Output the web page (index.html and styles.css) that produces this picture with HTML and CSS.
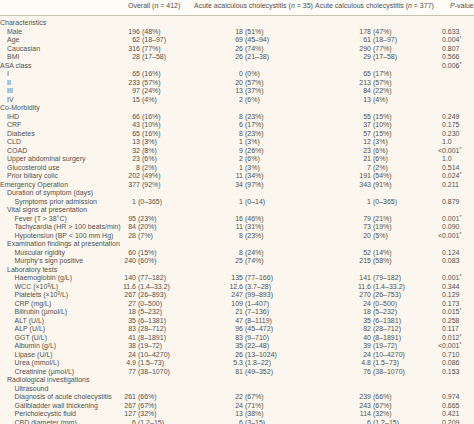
FILE: index.html
```html
<!DOCTYPE html>
<html>
<head>
<meta charset="utf-8">
<link rel="stylesheet" href="styles.css">
</head>
<body>
<div class="t">
  <div class="hd">
    <span></span>
    <span>Overall (<i>n</i> = 412)</span>
    <span>Acute acalculous cholecystitis (<i>n</i> = 35)</span>
    <span>Acute calculous cholecystitis (<i>n</i> = 377)</span>
    <span><i>P</i>-value</span>
  </div>

  <div class="r a"><span class="l0">Characteristics</span></div>
  <div class="r a"><span class="l1">Male</span><span class="c1"><span class="n">196</span> (48%)</span><span class="c2"><span class="n">18</span> (51%)</span><span class="c3"><span class="n">178</span> (47%)</span><span class="c4">0.633</span></div>
  <div class="r a"><span class="l1">Age</span><span class="c1"><span class="n">62</span> (18–97)</span><span class="c2"><span class="n">69</span> (45–94)</span><span class="c3"><span class="n">61</span> (18–97)</span><span class="c4">0.004<sup>*</sup></span></div>
  <div class="r a"><span class="l1">Caucasian</span><span class="c1"><span class="n">316</span> (77%)</span><span class="c2"><span class="n">26</span> (74%)</span><span class="c3"><span class="n">290</span> (77%)</span><span class="c4">0.807</span></div>
  <div class="r a"><span class="l1">BMI</span><span class="c1"><span class="n">28</span> (17–58)</span><span class="c2"><span class="n">26</span> (21–38)</span><span class="c3"><span class="n">29</span> (17–58)</span><span class="c4">0.566</span></div>
  <div class="r a"><span class="l0">ASA class</span><span class="c1"></span><span class="c2"></span><span class="c3"></span><span class="c4">0.006<sup>*</sup></span></div>
  <div class="r a"><span class="l1">I</span><span class="c1"><span class="n">65</span> (16%)</span><span class="c2"><span class="n">0</span> (0%)</span><span class="c3"><span class="n">65</span> (17%)</span><span class="c4"></span></div>
  <div class="r a"><span class="l1">II</span><span class="c1"><span class="n">233</span> (57%)</span><span class="c2"><span class="n">20</span> (57%)</span><span class="c3"><span class="n">213</span> (57%)</span><span class="c4"></span></div>
  <div class="r a"><span class="l1">III</span><span class="c1"><span class="n">97</span> (24%)</span><span class="c2"><span class="n">13</span> (37%)</span><span class="c3"><span class="n">84</span> (22%)</span><span class="c4"></span></div>
  <div class="r a"><span class="l1">IV</span><span class="c1"><span class="n">15</span> (4%)</span><span class="c2"><span class="n">2</span> (6%)</span><span class="c3"><span class="n">13</span> (4%)</span><span class="c4"></span></div>
  <div class="r a"><span class="l0">Co-Morbidity</span></div>
  <div class="r a"><span class="l1">IHD</span><span class="c1"><span class="n">66</span> (16%)</span><span class="c2"><span class="n">8</span> (23%)</span><span class="c3"><span class="n">55</span> (15%)</span><span class="c4">0.249</span></div>
  <div class="r a"><span class="l1">CRF</span><span class="c1"><span class="n">43</span> (10%)</span><span class="c2"><span class="n">6</span> (17%)</span><span class="c3"><span class="n">37</span> (10%)</span><span class="c4">0.175</span></div>
  <div class="r a"><span class="l1">Diabetes</span><span class="c1"><span class="n">65</span> (16%)</span><span class="c2"><span class="n">8</span> (23%)</span><span class="c3"><span class="n">57</span> (15%)</span><span class="c4">0.230</span></div>
  <div class="r a"><span class="l1">CLD</span><span class="c1"><span class="n">13</span> (3%)</span><span class="c2"><span class="n">1</span> (3%)</span><span class="c3"><span class="n">12</span> (3%)</span><span class="c4">1.0</span></div>
  <div class="r a"><span class="l1">COAD</span><span class="c1"><span class="n">32</span> (8%)</span><span class="c2"><span class="n">9</span> (26%)</span><span class="c3"><span class="n">23</span> (6%)</span><span class="c4"><span class="lt">&lt;</span>0.001<sup>*</sup></span></div>
  <div class="r a"><span class="l1">Upper abdominal surgery</span><span class="c1"><span class="n">23</span> (6%)</span><span class="c2"><span class="n">2</span> (6%)</span><span class="c3"><span class="n">21</span> (6%)</span><span class="c4">1.0</span></div>
  <div class="r a"><span class="l1">Glucosteroid use</span><span class="c1"><span class="n">8</span> (2%)</span><span class="c2"><span class="n">1</span> (3%)</span><span class="c3"><span class="n">7</span> (2%)</span><span class="c4">0.514</span></div>
  <div class="r a"><span class="l1">Prior biliary colic</span><span class="c1"><span class="n">202</span> (49%)</span><span class="c2"><span class="n">11</span> (34%)</span><span class="c3"><span class="n">191</span> (54%)</span><span class="c4">0.024<sup>*</sup></span></div>
  <div class="r a"><span class="l0">Emergency Operation</span><span class="c1"><span class="n">377</span> (92%)</span><span class="c2"><span class="n">34</span> (97%)</span><span class="c3"><span class="n">343</span> (91%)</span><span class="c4">0.211</span></div>
  <div class="r"><span class="l1">Duration of symptom (days)</span></div>
  <div class="r"><span class="l2">Symptoms prior admission</span><span class="c1"><span class="n">1</span> (0–365)</span><span class="c2"><span class="n">1</span> (0–14)</span><span class="c3"><span class="n">1</span> (0–365)</span><span class="c4">0.879</span></div>
  <div class="r"><span class="l1">Vital signs at presentation</span></div>
  <div class="r"><span class="l2">Fever (T &gt; 38°C)</span><span class="c1"><span class="n">95</span> (23%)</span><span class="c2"><span class="n">16</span> (46%)</span><span class="c3"><span class="n">79</span> (21%)</span><span class="c4">0.001<sup>*</sup></span></div>
  <div class="r"><span class="l2">Tachycardia (HR &gt; 100 beats/min)</span><span class="c1"><span class="n">84</span> (20%)</span><span class="c2"><span class="n">11</span> (31%)</span><span class="c3"><span class="n">73</span> (19%)</span><span class="c4">0.090</span></div>
  <div class="r"><span class="l2">Hypotension (BP &lt; 100 mm Hg)</span><span class="c1"><span class="n">28</span> (7%)</span><span class="c2"><span class="n">8</span> (23%)</span><span class="c3"><span class="n">20</span> (5%)</span><span class="c4"><span class="lt">&lt;</span>0.001<sup>*</sup></span></div>
  <div class="r"><span class="l1">Examination findings at presentation</span></div>
  <div class="r"><span class="l2">Muscular rigidity</span><span class="c1"><span class="n">60</span> (15%)</span><span class="c2"><span class="n">8</span> (24%)</span><span class="c3"><span class="n">52</span> (14%)</span><span class="c4">0.124</span></div>
  <div class="r"><span class="l2">Murphy’s sign positive</span><span class="c1"><span class="n">240</span> (60%)</span><span class="c2"><span class="n">25</span> (74%)</span><span class="c3"><span class="n">215</span> (58%)</span><span class="c4">0.083</span></div>
  <div class="r"><span class="l1">Laboratory tests</span></div>
  <div class="r"><span class="l2">Haemoglobin (g/L)</span><span class="c1"><span class="n">140</span> (77–182)</span><span class="c2"><span class="n">135</span> (77–166)</span><span class="c3"><span class="n">141</span> (79–182)</span><span class="c4">0.001<sup>*</sup></span></div>
  <div class="r"><span class="l2">WCC (×10<sup class="e">9</sup>/L)</span><span class="c1"><span class="n">11.6</span> (1.4–33.2)</span><span class="c2"><span class="n">12.6</span> (3.7–28)</span><span class="c3"><span class="n">11.6</span> (1.4–33.2)</span><span class="c4">0.344</span></div>
  <div class="r"><span class="l2">Platelets (×10<sup class="e">9</sup>/L)</span><span class="c1"><span class="n">267</span> (26–893)</span><span class="c2"><span class="n">247</span> (99–893)</span><span class="c3"><span class="n">270</span> (26–753)</span><span class="c4">0.129</span></div>
  <div class="r"><span class="l2">CRP (mg/L)</span><span class="c1"><span class="n">27</span> (0–500)</span><span class="c2"><span class="n">109</span> (1–407)</span><span class="c3"><span class="n">24</span> (0–500)</span><span class="c4">0.173</span></div>
  <div class="r"><span class="l2">Bilirubin (µmol/L)</span><span class="c1"><span class="n">18</span> (5–232)</span><span class="c2"><span class="n">21</span> (7–136)</span><span class="c3"><span class="n">18</span> (5–232)</span><span class="c4">0.015<sup>*</sup></span></div>
  <div class="r"><span class="l2">ALT (U/L)</span><span class="c1"><span class="n">35</span> (6–1381)</span><span class="c2"><span class="n">47</span> (8–1119)</span><span class="c3"><span class="n">35</span> (6–1381)</span><span class="c4">0.258</span></div>
  <div class="r"><span class="l2">ALP (U/L)</span><span class="c1"><span class="n">83</span> (28–712)</span><span class="c2"><span class="n">96</span> (45–472)</span><span class="c3"><span class="n">82</span> (28–712)</span><span class="c4">0.117</span></div>
  <div class="r"><span class="l2">GGT (U/L)</span><span class="c1"><span class="n">41</span> (8–1891)</span><span class="c2"><span class="n">83</span> (9–710)</span><span class="c3"><span class="n">40</span> (8–1891)</span><span class="c4">0.012<sup>*</sup></span></div>
  <div class="r"><span class="l2">Albumin (g/L)</span><span class="c1"><span class="n">38</span> (19–72)</span><span class="c2"><span class="n">35</span> (22–48)</span><span class="c3"><span class="n">39</span> (19–72)</span><span class="c4"><span class="lt">&lt;</span>0.001<sup>*</sup></span></div>
  <div class="r"><span class="l2">Lipase (U/L)</span><span class="c1"><span class="n">24</span> (10–4270)</span><span class="c2"><span class="n">26</span> (13–1024)</span><span class="c3"><span class="n">24</span> (10–4270)</span><span class="c4">0.710</span></div>
  <div class="r"><span class="l2">Urea (mmol/L)</span><span class="c1"><span class="n">4.9</span> (1.5–73)</span><span class="c2"><span class="n">5.3</span> (1.8–22)</span><span class="c3"><span class="n">4.8</span> (1.5–73)</span><span class="c4">0.086</span></div>
  <div class="r"><span class="l2">Creatinine (µmol/L)</span><span class="c1"><span class="n">77</span> (38–1070)</span><span class="c2"><span class="n">81</span> (49–352)</span><span class="c3"><span class="n">76</span> (38–1070)</span><span class="c4">0.153</span></div>
  <div class="r"><span class="l1">Radiological investigations</span></div>
  <div class="r"><span class="l2">Ultrasound</span></div>
  <div class="r"><span class="l2">Diagnosis of acute cholecystitis</span><span class="c1"><span class="n">261</span> (66%)</span><span class="c2"><span class="n">22</span> (67%)</span><span class="c3"><span class="n">239</span> (66%)</span><span class="c4">0.974</span></div>
  <div class="r"><span class="l2">Gallbladder wall thickening</span><span class="c1"><span class="n">267</span> (67%)</span><span class="c2"><span class="n">24</span> (71%)</span><span class="c3"><span class="n">243</span> (67%)</span><span class="c4">0.665</span></div>
  <div class="r"><span class="l2">Pericholecystic fluid</span><span class="c1"><span class="n">127</span> (32%)</span><span class="c2"><span class="n">13</span> (38%)</span><span class="c3"><span class="n">114</span> (32%)</span><span class="c4">0.421</span></div>
  <div class="r"><span class="l2">CBD diameter (mm)</span><span class="c1"><span class="n">6</span> (1.2–15)</span><span class="c2"><span class="n">6</span> (3–15)</span><span class="c3"><span class="n">6</span> (1.2–15)</span><span class="c4">0.209</span></div>
</div>
</body>
</html>
```
FILE: styles.css
```css
html, body {
  margin: 0;
  padding: 0;
}
body {
  width: 474px;
  height: 424px;
  overflow: hidden;
  background: #fbf7ee;
  font-family: "Liberation Sans", Arial, sans-serif;
  font-size: 7px;
  color: #525252;
}
.t {
  display: flex;
  flex-direction: column;
}
.hd {
  display: grid;
  grid-template-columns: 128px 66px 121px 135px 1fr;
  height: 13px;
  padding-top: 2px;
  line-height: 8.5px;
  white-space: nowrap;
  border-bottom: 1px solid #c9c3b6;
  margin-bottom: 3px;
  background: #fdfbf6;
}
.r {
  display: grid;
  grid-template-columns: 110px 84px 121px 123px 36px;
  height: 8.5px;
  line-height: 8.5px;
  white-space: nowrap;
}
.l0 { padding-left: 0; }
.l1 { padding-left: 7px; }
.l2 { padding-left: 14.5px; }
.n {
  display: inline-block;
  text-align: right;
}
.c1 .n { width: 26px; }
.a .c1 .n { width: 30px; }
.c2 .n { width: 49px; }
.c3 .n { width: 56px; }
.c4 { padding-left: 4px; }
.lt { margin-left: -4.1px; }
sup {
  font-size: 5px;
  line-height: 0;
  vertical-align: 2px;
}
sup.e {
  font-size: 4.5px;
}
```
